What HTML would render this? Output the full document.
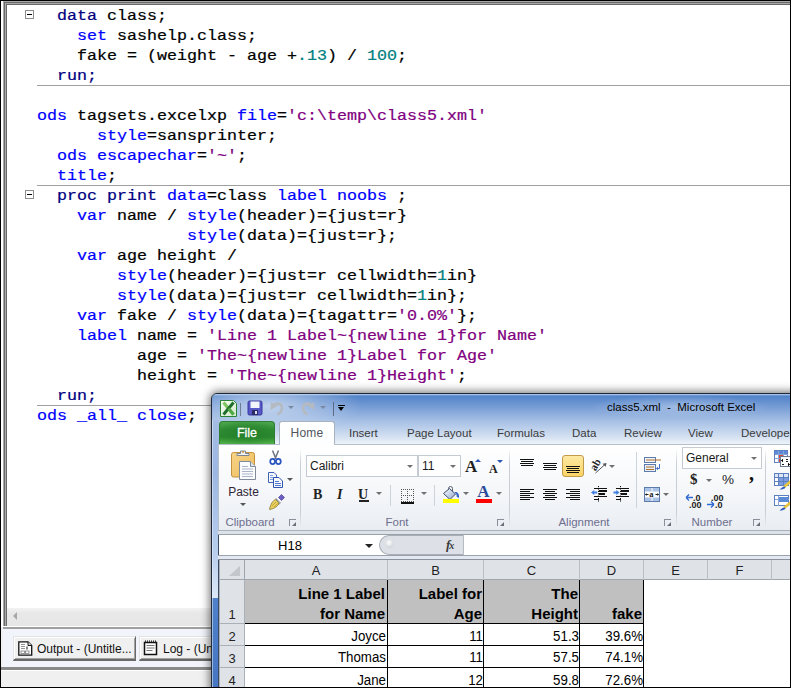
<!DOCTYPE html>
<html><head><meta charset="utf-8">
<style>
*{margin:0;padding:0;box-sizing:border-box}
html,body{width:791px;height:688px;overflow:hidden;background:#fff;position:relative;font-family:"Liberation Sans",sans-serif}
.abs{position:absolute}
#frame{position:absolute;left:0;top:0;width:791px;height:688px;background:#000}
#code{position:absolute;left:0;top:0;width:791px;height:688px;font-family:"Liberation Mono",monospace;font-size:14px;font-weight:normal;color:#000;-webkit-text-stroke-width:0.2px}
.ln{position:absolute;height:20px;line-height:20px;white-space:pre;transform:scaleX(1.190476);transform-origin:0 0}
.n{color:#000080}.b{color:#0000ff}.s{color:#800080}.t{color:#008080}
.sep{position:absolute;left:37px;right:1px;height:1px;background:#a0a0a0}
.fold{position:absolute;left:25px;width:9px;height:9px;border:1px solid #8c8c8c;background:#fff}
.fold:after{content:"";position:absolute;left:1px;top:3px;width:5px;height:1px;background:#000}
.chd{top:561px;height:20px;line-height:20px;text-align:center;font-size:13px;color:#222}
.rhd{left:219px;width:26px;height:20px;line-height:20px;text-align:center;font-size:13px;color:#222}
.hd{font-weight:bold;font-size:15px;line-height:20px;text-align:right;color:#000}
.cl{font-size:14px;line-height:20px;height:20px;text-align:right;color:#000;transform:scaleX(0.95);transform-origin:100% 0}
.tab{top:421px;height:24px;line-height:24px;font-size:11.5px;color:#3b3b3b;white-space:pre}
.glab{top:514px;height:16px;line-height:16px;font-size:11.5px;color:#6e6e8e;text-align:center;white-space:pre}
.dl{top:519px;width:7px;height:7px;border-left:1px solid #8a9099;border-top:1px solid #8a9099}
.dl:after{content:"";position:absolute;left:2px;top:2px;width:0;height:0;border-left:4px solid transparent;border-bottom:4px solid #6a7079}
.combo{background:#fff;border:1px solid #c5cbd3;font-size:12px;line-height:20px;padding-left:3px;color:#1a1a1a}
.arr{width:0;height:0;border-left:3.5px solid transparent;border-right:3.5px solid transparent;border-top:3.5px solid #707070}
.tbtn{top:636px;height:25px;background:#f0f0f0;border-top:1px solid #e3e3e3;border-left:1px solid #e3e3e3;border-right:1px solid #696969;border-bottom:2px solid #696969;box-shadow:inset 1px 1px 0 #fff,inset -1px -1px 0 #a0a0a0}
</style></head><body>
<div id="frame">
  <!-- editor outer -->
  <div class="abs" style="left:1px;top:1px;width:789px;height:686px;background:#f0f0f0"></div>
  <div class="abs" style="left:1px;top:1px;width:2px;height:625px;background:#fff"></div>
  <div class="abs" style="left:3px;top:1px;width:787px;height:1px;background:#a8a8a8"></div>
  <div class="abs" style="left:3px;top:2px;width:787px;height:1px;background:#696969"></div>
  <div class="abs" style="left:3px;top:3px;width:787px;height:1px;background:#a8a8a8"></div>
  <div class="abs" style="left:3px;top:4px;width:787px;height:1px;background:#696969"></div>
  <div class="abs" style="left:3px;top:1px;width:1px;height:625px;background:#a8a8a8"></div>
  <div class="abs" style="left:4px;top:2px;width:1px;height:624px;background:#696969"></div>
  <div class="abs" style="left:5px;top:3px;width:1px;height:623px;background:#a8a8a8"></div>
  <div class="abs" style="left:6px;top:4px;width:1px;height:622px;background:#696969"></div>
  <!-- white code area -->
  <div class="abs" style="left:7px;top:5px;width:783px;height:603px;background:#fff"></div>
  <!-- h scrollbar -->
  <div class="abs" style="left:7px;top:608px;width:783px;height:18px;background:linear-gradient(#f2f2f2,#e8e8e8 30%,#e6e6e6)"></div>
  <div class="abs" style="left:13px;top:612px;width:0;height:0;border-top:4px solid transparent;border-bottom:4px solid transparent;border-right:4px solid #a8a8a8"></div>
  <!-- taskbar area -->
  <div class="abs" style="left:1px;top:626px;width:789px;height:1px;background:#fff"></div>
  <div class="abs" style="left:3px;top:627px;width:787px;height:2px;background:#a0a0a0"></div>
  <div class="abs" style="left:3px;top:629px;width:787px;height:38px;background:#f1f5fb"></div>
  <div class="abs" style="left:1px;top:667px;width:789px;height:3px;background:#8a8a8a"></div>
  <div class="abs" style="left:1px;top:670px;width:789px;height:1px;background:#fff"></div>
  <div class="abs" style="left:1px;top:671px;width:789px;height:16px;background:#f0f0f0"></div>

  <!-- task buttons -->
  <div class="abs tbtn" style="left:13px;width:123px"></div>
  <div class="abs tbtn" style="left:139px;width:100px"></div>
  <svg class="abs" style="left:18px;top:641px" width="15" height="15" viewBox="0 0 15 15"><path d="M.8 .8h9.2l3.7 3.7v9.7H.8z" fill="#fff" stroke="#111" stroke-width="1.3"/><path d="M10 .8v3.7h3.7" fill="#ddd" stroke="#111" stroke-width="1"/><path d="M3 3.5h4M3 5.5h4M3 7.5h4" stroke="#888" stroke-width=".9"/><rect x="8" y="5.5" width="2" height="3" fill="#888"/><rect x="3" y="10" width="3.5" height="2.5" fill="none" stroke="#888" stroke-width=".9"/><rect x="7.5" y="10" width="3.5" height="2.5" fill="none" stroke="#888" stroke-width=".9"/></svg>
  <div class="abs" style="left:37px;top:641px;height:17px;line-height:17px;font-size:12px;color:#111;white-space:pre">Output - (Untitle...</div>
  <svg class="abs" style="left:143px;top:640px" width="15" height="16" viewBox="0 0 15 16"><path d="M1.5 2.5h12v12h-12z" fill="#fff" stroke="#111" stroke-width="1.5"/><path d="M2 1.2h11" stroke="#111" stroke-width="1.2" stroke-dasharray="1 1"/><path d="M3.5 5.5h8M3.5 8h8M3.5 10.5h6" stroke="#777"/></svg>
  <div class="abs" style="left:163px;top:641px;height:17px;line-height:17px;font-size:12px;color:#111;white-space:pre">Log - (Untitled)</div>
</div>

<div id="code">
  <div class="fold" style="top:10px"></div>
  <div class="fold" style="top:190px"></div>
  <div class="sep" style="top:85px"></div>
  <div class="sep" style="top:185px"></div>
  <div class="sep" style="top:405px"></div>
  <div class="ln" style="left:56.5px;top:6px"><span class="n">data</span> class;</div>
  <div class="ln" style="left:76.5px;top:26px"><span class="b">set</span> sashelp.class;</div>
  <div class="ln" style="left:76.5px;top:46px">fake = (weight - age +<span class="t">.13</span>) / <span class="t">100</span>;</div>
  <div class="ln" style="left:56.5px;top:66px"><span class="n">run;</span></div>
  <div class="ln" style="left:36.5px;top:106px"><span class="b">ods</span> tagsets.excelxp <span class="b">file</span>=<span class="s">'c:\temp\class5.xml'</span></div>
  <div class="ln" style="left:96.5px;top:126px"><span class="b">style</span>=sansprinter;</div>
  <div class="ln" style="left:56.5px;top:146px"><span class="b">ods escapechar</span>=<span class="s">'~'</span>;</div>
  <div class="ln" style="left:56.5px;top:166px"><span class="b">title</span>;</div>
  <div class="ln" style="left:56.5px;top:186px"><span class="n">proc print</span> <span class="b">data</span>=class <span class="b">label noobs</span> ;</div>
  <div class="ln" style="left:76.5px;top:206px"><span class="b">var</span> name / <span class="b">style</span>(header)={just=r}</div>
  <div class="ln" style="left:186.5px;top:226px"><span class="b">style</span>(data)={just=r};</div>
  <div class="ln" style="left:76.5px;top:246px"><span class="b">var</span> age height /</div>
  <div class="ln" style="left:116.5px;top:266px"><span class="b">style</span>(header)={just=r cellwidth=<span class="t">1</span>in}</div>
  <div class="ln" style="left:116.5px;top:286px"><span class="b">style</span>(data)={just=r cellwidth=<span class="t">1</span>in};</div>
  <div class="ln" style="left:76.5px;top:306px"><span class="b">var</span> fake / <span class="b">style</span>(data)={tagattr=<span class="s">'0.0%'</span>};</div>
  <div class="ln" style="left:76.5px;top:326px"><span class="b">label</span> name = <span class="s">'Line 1 Label~{newline 1}for Name'</span></div>
  <div class="ln" style="left:136.5px;top:346px">age = <span class="s">'The~{newline 1}Label for Age'</span></div>
  <div class="ln" style="left:136.5px;top:366px">height = <span class="s">'The~{newline 1}Height'</span>;</div>
  <div class="ln" style="left:56.5px;top:386px"><span class="n">run;</span></div>
  <div class="ln" style="left:36.5px;top:406px"><span class="b">ods _all_ close</span>;</div>
</div>

<!-- EXCEL -->
<div class="abs" style="left:790px;top:0;width:1px;height:688px;background:#000;z-index:50"></div><div class="abs" style="left:0;top:687px;width:791px;height:1px;background:#000;z-index:50"></div>

<div id="xl" class="abs" style="left:0;top:0;width:791px;height:688px;font-family:'Liberation Sans',sans-serif">
  <!-- shadow -->
    <div class="abs" style="left:211px;top:393px;width:600px;height:320px;border-radius:6px;background:#1f2b3c;box-shadow:0 0 10px 1px rgba(0,0,0,0.6)"></div>
  <!-- title+tabs area -->
  <div class="abs" style="left:212px;top:394px;width:600px;height:320px;border-radius:5px 0 0 0;background:linear-gradient(#bfd2ee 0px,#5283c9 2px,#7a9fd6 14px,#a9c2e6 28px,#d8e3f2 44px,#eef3f9 50px)"></div>
  <div class="abs" style="left:212px;top:394px;width:170px;height:34px;background:radial-gradient(ellipse 95px 30px at 55px 12px,rgba(205,220,242,0.85),rgba(205,220,242,0))"></div>
  <div class="abs" style="left:560px;top:394px;width:230px;height:30px;background:radial-gradient(ellipse 90px 12px at 120px 13px,rgba(200,216,240,0.5),rgba(200,216,240,0))"></div>

  <!-- QAT -->
  <svg class="abs" style="left:220px;top:400px" width="17" height="17" viewBox="0 0 17 17"><defs><linearGradient id="xg" x1="0" y1="0" x2="1" y2="1"><stop offset="0" stop-color="#fafdf8"/><stop offset="1" stop-color="#cfe8c8"/></linearGradient></defs><path d="M.5 .5h13l3 3v13H.5z" fill="url(#xg)" stroke="#2a8236"/><path d="M3.5 2.5l10 12" stroke="#7cc55f" stroke-width="3.2"/><path d="M13.5 2.5l-10 12" stroke="#1e6e2e" stroke-width="3"/><path d="M8.5 8.5l5 6" stroke="#4fa843" stroke-width="3"/></svg>
  <div class="abs" style="left:240px;top:403px;width:1px;height:13px;background:#6f7f95"></div>
  <svg class="abs" style="left:247px;top:400px" width="16" height="16" viewBox="0 0 16 16"><rect x="1" y="1" width="14" height="14" rx="1.5" fill="#5757c8" stroke="#3b3b9c"/><rect x="3.5" y="1.5" width="9" height="6.5" fill="#f2f4fb"/><rect x="5" y="10" width="6" height="5" fill="#2b2b66"/><rect x="8" y="11" width="2" height="3" fill="#dde"/></svg>
  <svg class="abs" style="left:269px;top:399px" width="16" height="17" viewBox="0 0 16 17"><path d="M5.5 5.5C9 3.5 13 5 13 9c0 2.5-1.5 4.5-3.5 6" fill="none" stroke="#b5bac1" stroke-width="2.6" stroke-linecap="round"/><path d="M1.5 11L2 3.5l7 3z" fill="#b5bac1"/></svg>
  <div class="abs" style="left:288px;top:406px;width:0;height:0;border-left:3px solid transparent;border-right:3px solid transparent;border-top:3px solid #7a8aa2"></div>
  <svg class="abs" style="left:300px;top:399px" width="16" height="17" viewBox="0 0 16 17"><path d="M10.5 5.5C7 3.5 3 5 3 9c0 2.5 1.5 4.5 3.5 6" fill="none" stroke="#b5bac1" stroke-width="2.6" stroke-linecap="round"/><path d="M14.5 11L14 3.5l-7 3z" fill="#b5bac1"/></svg>
  <div class="abs" style="left:320px;top:406px;width:0;height:0;border-left:3px solid transparent;border-right:3px solid transparent;border-top:3px solid #7a8aa2"></div>
  <div class="abs" style="left:333px;top:402px;width:1px;height:14px;background:#5a6a80"></div>
  <div class="abs" style="left:338px;top:405px;width:7px;height:1px;background:#000"></div>
  <div class="abs" style="left:338px;top:407px;width:0;height:0;border-left:3.5px solid transparent;border-right:3.5px solid transparent;border-top:4px solid #000"></div>
  <!-- title -->
  <div class="abs" style="left:560px;top:398px;width:250px;height:18px;font-size:11.5px;line-height:18px;color:#000;white-space:pre;padding-left:47px">class5.xml  -  Microsoft Excel</div>
  <!-- File button -->
  <div class="abs" style="left:219px;top:421px;width:56px;height:24px;border-radius:4px 4px 0 0;border:1px solid #2e7d32;border-bottom:none;background:radial-gradient(ellipse 30px 14px at 50% 45%,#23802a,rgba(35,128,42,0)),linear-gradient(#4fa84f,#2f8c33 35%,#2a872e 65%,#58b94c);color:#fff;font-size:12.5px;line-height:23px;text-align:center;-webkit-text-stroke:0.3px #fff">File</div>
  <!-- Home tab -->
  <div class="abs" style="left:279px;top:421px;width:56px;height:24px;border-radius:3px 3px 0 0;border:1px solid #a9b3bf;border-bottom:none;background:linear-gradient(#fff,#fdfeff);color:#50545c;font-size:12px;letter-spacing:0.2px;line-height:23px;text-align:center">Home</div>
  <div class="abs tab" style="left:349px">Insert</div>
  <div class="abs tab" style="left:407px">Page Layout</div>
  <div class="abs tab" style="left:497px">Formulas</div>
  <div class="abs tab" style="left:572px">Data</div>
  <div class="abs tab" style="left:624px">Review</div>
  <div class="abs tab" style="left:688px">View</div>
  <div class="abs tab" style="left:741px">Developer</div>
  <!-- blue frame left -->
  <div class="abs" style="left:212px;top:420px;width:7px;height:178px;background:linear-gradient(#a3bde5,#9cb7e2 30%,#b9cfee 75%,#dce8f6)"></div>
  <div class="abs" style="left:212px;top:598px;width:7px;height:95px;background:linear-gradient(#4f80ca,#4676c2)"></div>
  <div class="abs" style="left:212px;top:420px;width:1px;height:270px;background:rgba(230,238,250,0.55)"></div>
  <div class="abs" style="left:218px;top:530px;width:1px;height:160px;background:#3b4a63"></div>
  <!-- ribbon -->
  <div class="abs" style="left:218px;top:444px;width:580px;height:86px;background:linear-gradient(#ffffff,#f4f6f9 60%,#e9edf2);border-top:1px solid #b4bfcd;border-left:1px solid #b4bfcd"></div>
  <div class="abs" style="left:280px;top:444px;width:54px;height:1px;background:#fff"></div>
  <div class="abs" style="left:218px;top:530px;width:580px;height:1px;background:#a9b2bd"></div>
  <div class="abs" style="left:218px;top:531px;width:580px;height:3px;background:#dde2e9"></div>
  <div class="abs" style="left:218px;top:534px;width:580px;height:1px;background:#9aa2ac"></div>

  <!-- RIBBON CONTENT -->
  <!-- Clipboard -->
  <svg class="abs" style="left:230px;top:449px" width="28" height="32" viewBox="0 0 28 32">
    <defs><linearGradient id="cbg" x1="0" y1="0" x2="1" y2="1"><stop offset="0" stop-color="#f7d488"/><stop offset="1" stop-color="#eebc5c"/></linearGradient></defs>
    <rect x="1.5" y="3.5" width="23" height="24.5" rx="2" fill="url(#cbg)" stroke="#c4913f"/>
    <path d="M7 6.5h12v-2h-3.5v-2.5h-5v2.5H7z" fill="#eef0f3" stroke="#7d848e"/>
    <circle cx="13" cy="3" r=".9" fill="#c98a2a"/>
    <path d="M9.5 12.5h11l5 5v13h-16z" fill="#fbfcfe" stroke="#7f8b9b"/>
    <path d="M20.5 12.5v5h5" fill="#dfe5ee" stroke="#7f8b9b"/>
    <path d="M12 17.5h6M12 20h11M12 22.5h11M12 25h11M12 27.5h11" stroke="#aab6c8"/>
  </svg>
  <div class="abs" style="left:228px;top:484px;width:31px;height:16px;font-size:12px;line-height:16px;color:#2f2538;text-align:center">Paste</div>
  <div class="abs" style="left:240px;top:503px;width:0;height:0;border-left:3.5px solid transparent;border-right:3.5px solid transparent;border-top:3.5px solid #555"></div>
  <svg class="abs" style="left:269px;top:450px" width="13" height="15" viewBox="0 0 13 15"><path d="M3.5 .5L7 9M9.5 .5L6 9" stroke="#6b7280" stroke-width="1.5"/><ellipse cx="3.6" cy="11.5" rx="2.4" ry="2.6" fill="none" stroke="#2c56c2" stroke-width="1.7"/><ellipse cx="9.4" cy="11.5" rx="2.4" ry="2.6" fill="none" stroke="#2c56c2" stroke-width="1.7"/></svg>
  <svg class="abs" style="left:267px;top:472px" width="18" height="16" viewBox="0 0 18 16"><path d="M1.5 .5h5.5l2.5 2.5v7.5H1.5z" fill="#f6f8fc" stroke="#3f63b3"/><path d="M3 3.5h3M3 5.5h4.5M3 7.5h4.5" stroke="#5d86d6" stroke-width=".8"/><path d="M6.5 5.5h5.5l3.5 3.5v6.5h-9z" fill="#f6f8fc" stroke="#2f55b0"/><path d="M8 9.5h4M8 11.5h6M8 13.5h6" stroke="#3a66cc" stroke-width=".9"/></svg>
  <div class="abs" style="left:287px;top:478px;width:0;height:0;border-left:3.5px solid transparent;border-right:3.5px solid transparent;border-top:3.5px solid #555"></div>
  <svg class="abs" style="left:268px;top:494px" width="17" height="16" viewBox="0 0 17 16"><path d="M10.5 3.5l3-3 3 3-3 3z" fill="#6b5fc4" stroke="#4a3fa0" stroke-width=".7"/><path d="M8 4.5l4.5 4.5-2 1.5z" fill="#c9cdd3" stroke="#6e747c" stroke-width=".7"/><path d="M7.5 5.5l3.5 3.5c-1 3-4 5.5-9.5 6.5C2.5 10 5 6.5 7.5 5.5z" fill="#e8cf5e" stroke="#8b7a2e" stroke-width=".8"/><path d="M4 12l4-4M6 13l3.5-3.5" stroke="#b69a32" stroke-width=".7"/></svg>
  <div class="abs glab" style="left:222px;width:56px">Clipboard</div>
  <div class="abs dl" style="left:289px"></div>
  <div class="abs" style="left:300px;top:448px;width:1px;height:80px;background:linear-gradient(rgba(200,206,214,0),#c8ced6 20%,#c8ced6 80%,rgba(200,206,214,0))"></div>
  <!-- Font -->
  <div class="abs combo" style="left:306px;top:455px;width:112px;height:22px">Calibri</div>
  <div class="abs arr" style="left:407px;top:465px"></div>
  <div class="abs combo" style="left:418px;top:455px;width:43px;height:22px">11</div>
  <div class="abs arr" style="left:450px;top:465px"></div>
  <div class="abs" style="left:465px;top:457px;width:16px;height:20px;font-family:'Liberation Serif',serif;font-weight:bold;font-size:17px;line-height:20px;color:#222">A</div>
  <div class="abs" style="left:475px;top:459px;width:0;height:0;border-left:3.5px solid transparent;border-right:3.5px solid transparent;border-bottom:3.5px solid #2a55b5"></div>
  <div class="abs" style="left:489px;top:461px;width:12px;height:16px;font-family:'Liberation Serif',serif;font-weight:bold;font-size:12px;line-height:16px;color:#222">A</div>
  <div class="abs" style="left:497px;top:460px;width:0;height:0;border-left:3.5px solid transparent;border-right:3.5px solid transparent;border-top:3.5px solid #2a55b5"></div>
  <div class="abs" style="left:313px;top:486px;width:12px;height:18px;font-family:'Liberation Serif',serif;font-weight:bold;font-size:14px;line-height:18px;color:#222">B</div>
  <div class="abs" style="left:337px;top:486px;width:12px;height:18px;font-family:'Liberation Serif',serif;font-weight:bold;font-style:italic;font-size:14px;line-height:18px;color:#222">I</div>
  <div class="abs" style="left:358px;top:486px;width:12px;height:18px;font-family:'Liberation Serif',serif;font-weight:bold;font-size:14px;line-height:18px;color:#222">U</div>
  <div class="abs" style="left:359px;top:500px;width:10px;height:1.5px;background:#222"></div>
  <div class="abs arr" style="left:376px;top:492px"></div>
  <div class="abs" style="left:390px;top:485px;width:1px;height:21px;background:#cdd3da"></div>
  <svg class="abs" style="left:401px;top:489px" width="14" height="16" viewBox="0 0 14 16" shape-rendering="crispEdges"><g fill="#555"><rect x="0" y="0" width="1" height="1"/><rect x="2" y="0" width="1" height="1"/><rect x="4" y="0" width="1" height="1"/><rect x="6" y="0" width="1" height="1"/><rect x="8" y="0" width="1" height="1"/><rect x="10" y="0" width="1" height="1"/><rect x="12" y="0" width="1" height="1"/><rect x="0" y="2" width="1" height="1"/><rect x="6" y="2" width="1" height="1"/><rect x="12" y="2" width="1" height="1"/><rect x="0" y="4" width="1" height="1"/><rect x="6" y="4" width="1" height="1"/><rect x="12" y="4" width="1" height="1"/><rect x="0" y="6" width="1" height="1"/><rect x="2" y="6" width="1" height="1"/><rect x="4" y="6" width="1" height="1"/><rect x="6" y="6" width="1" height="1"/><rect x="8" y="6" width="1" height="1"/><rect x="10" y="6" width="1" height="1"/><rect x="12" y="6" width="1" height="1"/><rect x="0" y="8" width="1" height="1"/><rect x="6" y="8" width="1" height="1"/><rect x="12" y="8" width="1" height="1"/><rect x="0" y="10" width="1" height="1"/><rect x="6" y="10" width="1" height="1"/><rect x="12" y="10" width="1" height="1"/><rect x="0" y="12" width="1" height="1"/><rect x="2" y="12" width="1" height="1"/><rect x="4" y="12" width="1" height="1"/><rect x="6" y="12" width="1" height="1"/><rect x="8" y="12" width="1" height="1"/><rect x="10" y="12" width="1" height="1"/><rect x="12" y="12" width="1" height="1"/></g><rect x="0" y="13" width="13" height="1.6" fill="#111"/></svg>
  <div class="abs arr" style="left:421px;top:492px"></div>
  <div class="abs" style="left:434px;top:485px;width:1px;height:21px;background:#cdd3da"></div>
  <svg class="abs" style="left:442px;top:486px" width="18" height="14" viewBox="0 0 18 14"><defs><linearGradient id="bk" x1="0" y1="0" x2="1" y2="1"><stop offset="0" stop-color="#ffffff"/><stop offset="1" stop-color="#8ea6cf"/></linearGradient></defs><path d="M6.5 5V2.5a2 2 0 0 1 4 0V6" fill="none" stroke="#5a6170" stroke-width="1"/><path d="M1.5 7.5L7.5 2.5l6 5.5-5.5 5.5z" fill="url(#bk)" stroke="#3d4d6b" stroke-width="1"/><path d="M13 6c2.5-.5 4.5 2 4 6l-2.5-1.5c.5-1.5 0-3-1.5-3.5z" fill="#2f63c6"/></svg>
  <div class="abs" style="left:443px;top:499px;width:16px;height:4px;background:#ffff00"></div>
  <div class="abs arr" style="left:463px;top:492px"></div>
  <div class="abs" style="left:475px;top:484px;width:17px;height:16px;font-family:'Liberation Serif',serif;font-weight:bold;font-size:17px;line-height:16px;color:#2a4c98;text-align:center">A</div>
  <div class="abs" style="left:476px;top:499px;width:16px;height:4px;background:#ff0000"></div>
  <div class="abs arr" style="left:496px;top:492px"></div>
  <div class="abs glab" style="left:380px;width:34px">Font</div>
  <div class="abs dl" style="left:497px"></div>
  <div class="abs" style="left:509px;top:448px;width:1px;height:80px;background:linear-gradient(rgba(200,206,214,0),#c8ced6 20%,#c8ced6 80%,rgba(200,206,214,0))"></div>
  <!-- Alignment -->
  <div class="abs" style="left:520px;top:459px;width:14px;height:1.4px;background:#111"></div><div class="abs" style="left:521px;top:461px;width:12px;height:1.4px;background:#111"></div><div class="abs" style="left:520px;top:463px;width:14px;height:1.4px;background:#111"></div><div class="abs" style="left:521px;top:465px;width:12px;height:1.4px;background:#111"></div>
  <div class="abs" style="left:543px;top:463px;width:14px;height:1.4px;background:#111"></div><div class="abs" style="left:544px;top:465px;width:12px;height:1.4px;background:#111"></div><div class="abs" style="left:543px;top:467px;width:14px;height:1.4px;background:#111"></div><div class="abs" style="left:544px;top:469px;width:12px;height:1.4px;background:#111"></div>
  <div class="abs" style="left:562px;top:455px;width:22px;height:22px;border:1px solid #c29b4a;border-radius:3px;background:linear-gradient(#fde9a4,#fbd465)"></div>
  <div class="abs" style="left:566px;top:466px;width:14px;height:1.4px;background:#111"></div><div class="abs" style="left:567px;top:468px;width:12px;height:1.4px;background:#111"></div><div class="abs" style="left:566px;top:470px;width:14px;height:1.4px;background:#111"></div><div class="abs" style="left:567px;top:472px;width:12px;height:1.4px;background:#111"></div>
  <svg class="abs" style="left:591px;top:458px" width="18" height="16" viewBox="0 0 18 16"><text x="0" y="0" transform="translate(4.5 13.5) rotate(-60)" font-family="Liberation Serif" font-size="11" font-weight="bold" fill="#222">ab</text><path d="M4.5 15L14.5 6" stroke="#555" stroke-width="1"/><path d="M15.5 5l-4 .8 3.2 3z" fill="#555"/></svg>
  <div class="abs arr" style="left:609px;top:465px"></div>
  <div class="abs" style="left:520px;top:489px;width:14px;height:1.4px;background:#111"></div><div class="abs" style="left:520px;top:491px;width:10px;height:1.4px;background:#111"></div><div class="abs" style="left:520px;top:493px;width:14px;height:1.4px;background:#111"></div><div class="abs" style="left:520px;top:495px;width:10px;height:1.4px;background:#111"></div><div class="abs" style="left:520px;top:497px;width:14px;height:1.4px;background:#111"></div><div class="abs" style="left:520px;top:499px;width:10px;height:1.4px;background:#111"></div>
  <div class="abs" style="left:543px;top:489px;width:14px;height:1.4px;background:#111"></div><div class="abs" style="left:545px;top:491px;width:10px;height:1.4px;background:#111"></div><div class="abs" style="left:543px;top:493px;width:14px;height:1.4px;background:#111"></div><div class="abs" style="left:545px;top:495px;width:10px;height:1.4px;background:#111"></div><div class="abs" style="left:543px;top:497px;width:14px;height:1.4px;background:#111"></div><div class="abs" style="left:545px;top:499px;width:10px;height:1.4px;background:#111"></div>
  <div class="abs" style="left:566px;top:489px;width:14px;height:1.4px;background:#111"></div><div class="abs" style="left:570px;top:491px;width:10px;height:1.4px;background:#111"></div><div class="abs" style="left:566px;top:493px;width:14px;height:1.4px;background:#111"></div><div class="abs" style="left:570px;top:495px;width:10px;height:1.4px;background:#111"></div><div class="abs" style="left:566px;top:497px;width:14px;height:1.4px;background:#111"></div><div class="abs" style="left:570px;top:499px;width:10px;height:1.4px;background:#111"></div>
  <svg class="abs" style="left:591px;top:486px" width="16" height="16" viewBox="0 0 16 16"><path d="M7.5 0v16" stroke="#111" stroke-dasharray="1.2 1.2"/><path d="M3 2.5h13M3 10.5h13M3 13.5h5" stroke="#111"/><path d="M8 5h8M8 8h6" stroke="#111" stroke-width="2"/><path d="M0 6.5l3.2-2.6v1.7h3v1.8h-3v1.7z" fill="#3f7de0"/></svg>
  <svg class="abs" style="left:613px;top:486px" width="16" height="16" viewBox="0 0 16 16"><path d="M7.5 0v16" stroke="#111" stroke-dasharray="1.2 1.2"/><path d="M3 2.5h13M3 10.5h13M3 13.5h5" stroke="#111"/><path d="M8 5h8M8 8h6" stroke="#111" stroke-width="2"/><path d="M6.5 6.5L3.3 3.9v1.7H0.5v1.8h2.8v1.7z" fill="#3f7de0"/></svg>
  <div class="abs" style="left:636px;top:452px;width:1px;height:56px;background:#cdd3da"></div>
  <svg class="abs" style="left:644px;top:457px" width="17" height="17" viewBox="0 0 17 17"><rect x=".5" y=".5" width="11" height="5" fill="#eef3fa" stroke="#5d7bab"/><rect x=".5" y="7.5" width="11" height="7" fill="#e6eef9" stroke="#5d7bab"/><path d="M2 3h15M2 10h8M2 12.5h8" stroke="#b0702e" stroke-width="1.1"/><path d="M15.5 7v4.5h-3" stroke="#3f6fc6" fill="none"/><path d="M12 11.5l2-1.7v3.4z" fill="#3f6fc6"/></svg>
  <svg class="abs" style="left:644px;top:487px" width="17" height="16" viewBox="0 0 17 16"><rect x=".5" y=".5" width="15" height="14" fill="#fff" stroke="#5d7bab"/><rect x="1" y="1" width="14" height="3.5" fill="#a9c2e6"/><rect x="1" y="10.5" width="14" height="3.5" fill="#a9c2e6"/><path d="M8 1v3.5M8 10.5v3.5" stroke="#fff"/><text x="5.2" y="9.8" font-family="Liberation Serif" font-size="8.5" font-weight="bold" fill="#222">a</text><path d="M1.5 7.5h3M11.5 7.5h3" stroke="#222"/><path d="M1 7.5l1.6-1.4v2.8zM15 7.5l-1.6-1.4v2.8z" fill="#222"/></svg>
  <div class="abs arr" style="left:663px;top:493px"></div>
  <div class="abs glab" style="left:554px;width:60px">Alignment</div>
  <div class="abs dl" style="left:664px"></div>
  <div class="abs" style="left:676px;top:448px;width:1px;height:80px;background:linear-gradient(rgba(200,206,214,0),#c8ced6 20%,#c8ced6 80%,rgba(200,206,214,0))"></div>
  <!-- Number -->
  <div class="abs combo" style="left:682px;top:447px;width:80px;height:22px">General</div>
  <div class="abs arr" style="left:751px;top:457px"></div>
  <div class="abs" style="left:690px;top:470px;width:12px;height:18px;font-family:'Liberation Serif',serif;font-weight:bold;font-size:15px;line-height:18px;color:#222">$</div>
  <div class="abs arr" style="left:706px;top:479px"></div>
  <div class="abs" style="left:722px;top:471px;width:14px;height:18px;font-family:'Liberation Sans',sans-serif;font-size:13.5px;line-height:18px;color:#222">%</div>
  <div class="abs" style="left:749px;top:464px;width:8px;height:18px;font-family:'Liberation Serif',serif;font-weight:bold;font-size:20px;line-height:18px;color:#111">,</div>
  <div class="abs" style="left:693px;top:494px;width:10px;height:8px;font-size:9px;line-height:8px;font-weight:bold;color:#222">.0</div>
  <div class="abs" style="left:689px;top:501px;width:14px;height:8px;font-size:9px;line-height:8px;font-weight:bold;color:#222">.00</div>
  <svg class="abs" style="left:685px;top:494px" width="8" height="7" viewBox="0 0 8 7"><path d="M1 3.5h7M1 3.5l3-3M1 3.5l3 3" stroke="#2f6bd1" stroke-width="1.3" fill="none"/></svg>
  <div class="abs" style="left:711px;top:494px;width:14px;height:8px;font-size:9px;line-height:8px;font-weight:bold;color:#222">.00</div>
  <div class="abs" style="left:715px;top:501px;width:10px;height:8px;font-size:9px;line-height:8px;font-weight:bold;color:#222">.0</div>
  <svg class="abs" style="left:707px;top:501px" width="8" height="7" viewBox="0 0 8 7"><path d="M0 3.5h7M7 3.5l-3-3M7 3.5l-3 3" stroke="#2f6bd1" stroke-width="1.3" fill="none"/></svg>
  <div class="abs glab" style="left:684px;width:56px">Number</div>
  <div class="abs dl" style="left:753px"></div>
  <div class="abs" style="left:765px;top:448px;width:1px;height:80px;background:linear-gradient(rgba(200,206,214,0),#c8ced6 20%,#c8ced6 80%,rgba(200,206,214,0))"></div>
  <!-- Styles icons (partial) -->
  <svg class="abs" style="left:774px;top:450px" width="17" height="17" viewBox="0 0 17 17" shape-rendering="crispEdges"><rect x=".5" y=".5" width="13" height="12" fill="#fff" stroke="#5b7fbf"/><rect x="1" y="1" width="12" height="3" fill="#5b8ad6"/><path d="M.5 4.5h13M.5 8.5h13M4.5 .5v12M9.5 .5v12" stroke="#8aa6d6"/><rect x="5" y="5" width="4" height="3" fill="#e2452f"/><rect x="5" y="9" width="4" height="3" fill="#e2452f"/><rect x="6.5" y="6.5" width="10" height="10" fill="#fff" stroke="#6a7a94"/><path d="M9 9l-1.5 1.5L9 12M8 14h2M12 9h2M12 11h2M14 13l1.5 1.5L14 16" stroke="#222"/></svg>
  <svg class="abs" style="left:774px;top:473px" width="17" height="17" viewBox="0 0 17 17" shape-rendering="crispEdges"><rect x=".5" y=".5" width="14" height="12" fill="#fff" stroke="#5b7fbf"/><rect x="1" y="1" width="13" height="3" fill="#dce6f6"/><rect x="5" y="5" width="9" height="7" fill="#7c9ee0"/><path d="M.5 4.5h14M.5 8.5h14M4.5 .5v12M9.5 .5v12" stroke="#5b7fbf"/><path d="M16.5 8.5L10 14" stroke="#e9c43a" stroke-width="2.5" shape-rendering="auto"/><path d="M10.5 13.5c-2 0-3 1.5-5 3 3 0 5-.5 6-2z" fill="#2f5fc0" shape-rendering="auto"/></svg>
  <svg class="abs" style="left:774px;top:495px" width="17" height="17" viewBox="0 0 17 17" shape-rendering="crispEdges"><rect x=".5" y=".5" width="14" height="10" fill="#fff" stroke="#5b7fbf"/><path d="M.5 4.5h14M4.5 .5v10" stroke="#8aa6d6"/><rect x="5" y="2" width="9" height="5" fill="#5b8ad6"/><path d="M16.5 7.5L10 13" stroke="#e9c43a" stroke-width="2.5" shape-rendering="auto"/><path d="M10.5 12.5c-2 0-3 1.5-5 3 3 0 5-.5 6-2z" fill="#2f5fc0" shape-rendering="auto"/></svg>
  <!-- formula bar -->
  <div class="abs" style="left:219px;top:535px;width:575px;height:20px;background:#fff"></div>
  <div class="abs" style="left:218px;top:555px;width:580px;height:1px;background:#9aa2ac"></div>
  <div class="abs" style="left:218px;top:556px;width:580px;height:3px;background:#e3e8f3"></div>
  <div class="abs" style="left:218px;top:559px;width:580px;height:1px;background:#8a929c"></div>
  <!-- sheet -->
  <div class="abs" style="left:219px;top:560px;width:575px;height:130px;background:#fff"></div>

  <!-- name box -->
  <div class="abs" style="left:219px;top:536px;width:160px;height:20px;font-size:13px;line-height:20px;text-align:center;color:#000;padding-right:18px">H18</div>
  <div class="abs" style="left:365px;top:544px;width:0;height:0;border-left:4px solid transparent;border-right:4px solid transparent;border-top:4px solid #222"></div>
  <div class="abs" style="left:379px;top:535px;width:85px;height:20px;background:#dde1e7;border-radius:10px 0 0 10px;border:1px solid #a8aeb6;border-right:1px solid #b5bbc3"></div>
  <div class="abs" style="left:385px;top:539px;width:9px;height:9px;border-radius:50%;background:radial-gradient(circle at 45% 40%,#fdfdfd,#cfd3d8 75%)"></div>
  <div class="abs" style="left:446px;top:535px;width:16px;height:20px;font-family:'Liberation Serif',serif;font-style:italic;font-weight:bold;font-size:13px;line-height:20px;color:#3a3a3a;letter-spacing:-1px">f<span style="font-size:10px">x</span></div>
  <!-- column headers -->
  <div class="abs" style="left:219px;top:560px;width:575px;height:20px;background:#dfe3e8;border-bottom:1px solid #9fa6ae"></div>
  <div class="abs" style="left:219px;top:580px;width:26px;height:110px;background:#dfe3e8"></div>
  <div class="abs" style="left:219px;top:560px;width:1px;height:130px;background:#a9b0b8"></div>
  <div class="abs" style="left:244px;top:560px;width:1px;height:20px;background:#9ea5ad"></div>
  <div class="abs" style="left:244px;top:580px;width:1px;height:110px;background:#aab1b9"></div>
  <div class="abs" style="left:229px;top:566px;width:0;height:0;border-left:11px solid transparent;border-bottom:10px solid #c2c7cc"></div>
  <div class="abs" style="left:387px;top:560px;width:1px;height:20px;background:#b8bfc7"></div>
  <div class="abs" style="left:483px;top:560px;width:1px;height:20px;background:#b8bfc7"></div>
  <div class="abs" style="left:579px;top:560px;width:1px;height:20px;background:#b8bfc7"></div>
  <div class="abs" style="left:643px;top:560px;width:1px;height:20px;background:#b8bfc7"></div>
  <div class="abs" style="left:707px;top:560px;width:1px;height:20px;background:#b8bfc7"></div>
  <div class="abs" style="left:771px;top:560px;width:1px;height:20px;background:#b8bfc7"></div>
  <div class="abs chd" style="left:245px;width:142px">A</div>
  <div class="abs chd" style="left:388px;width:95px">B</div>
  <div class="abs chd" style="left:484px;width:95px">C</div>
  <div class="abs chd" style="left:580px;width:63px">D</div>
  <div class="abs chd" style="left:644px;width:63px">E</div>
  <div class="abs chd" style="left:708px;width:63px">F</div>
  <!-- row headers -->
  <div class="abs" style="left:219px;top:623px;width:26px;height:1px;background:#aab0b8"></div>
  <div class="abs" style="left:219px;top:645px;width:26px;height:1px;background:#aab0b8"></div>
  <div class="abs" style="left:219px;top:667px;width:26px;height:1px;background:#aab0b8"></div>
  <div class="abs rhd" style="top:605px">1</div>
  <div class="abs rhd" style="top:627px">2</div>
  <div class="abs rhd" style="top:649px">3</div>
  <div class="abs rhd" style="top:671px">4</div>
  <!-- cells -->
  <div class="abs" style="left:245px;top:580px;width:399px;height:43px;background:#c0c0c0"></div>
  <div class="abs" style="left:245px;top:623px;width:399px;height:1px;background:#000"></div>
  <div class="abs" style="left:245px;top:645px;width:399px;height:1px;background:#000"></div>
  <div class="abs" style="left:245px;top:667px;width:399px;height:1px;background:#000"></div>
  <div class="abs" style="left:387px;top:580px;width:1px;height:110px;background:#000"></div>
  <div class="abs" style="left:483px;top:580px;width:1px;height:110px;background:#000"></div>
  <div class="abs" style="left:579px;top:580px;width:1px;height:110px;background:#000"></div>
  <div class="abs" style="left:643px;top:580px;width:1px;height:110px;background:#000"></div>
  <div class="abs hd" style="left:245px;top:584px;width:140px">Line 1 Label<br>for Name</div>
  <div class="abs hd" style="left:388px;top:584px;width:94px">Label for<br>Age</div>
  <div class="abs hd" style="left:484px;top:584px;width:94px">The<br>Height</div>
  <div class="abs hd" style="left:580px;top:604px;width:62px">fake</div>
  <div class="abs cl" style="left:245px;top:626px;width:141px">Joyce</div>
  <div class="abs cl" style="left:388px;top:626px;width:95px">11</div>
  <div class="abs cl" style="left:484px;top:626px;width:95px">51.3</div>
  <div class="abs cl" style="left:580px;top:626px;width:63px">39.6%</div>
  <div class="abs cl" style="left:245px;top:647px;width:141px">Thomas</div>
  <div class="abs cl" style="left:388px;top:647px;width:95px">11</div>
  <div class="abs cl" style="left:484px;top:647px;width:95px">57.5</div>
  <div class="abs cl" style="left:580px;top:647px;width:63px">74.1%</div>
  <div class="abs cl" style="left:245px;top:670px;width:141px">Jane</div>
  <div class="abs cl" style="left:388px;top:670px;width:95px">12</div>
  <div class="abs cl" style="left:484px;top:670px;width:95px">59.8</div>
  <div class="abs cl" style="left:580px;top:670px;width:63px">72.6%</div>
</div>


</body></html>
